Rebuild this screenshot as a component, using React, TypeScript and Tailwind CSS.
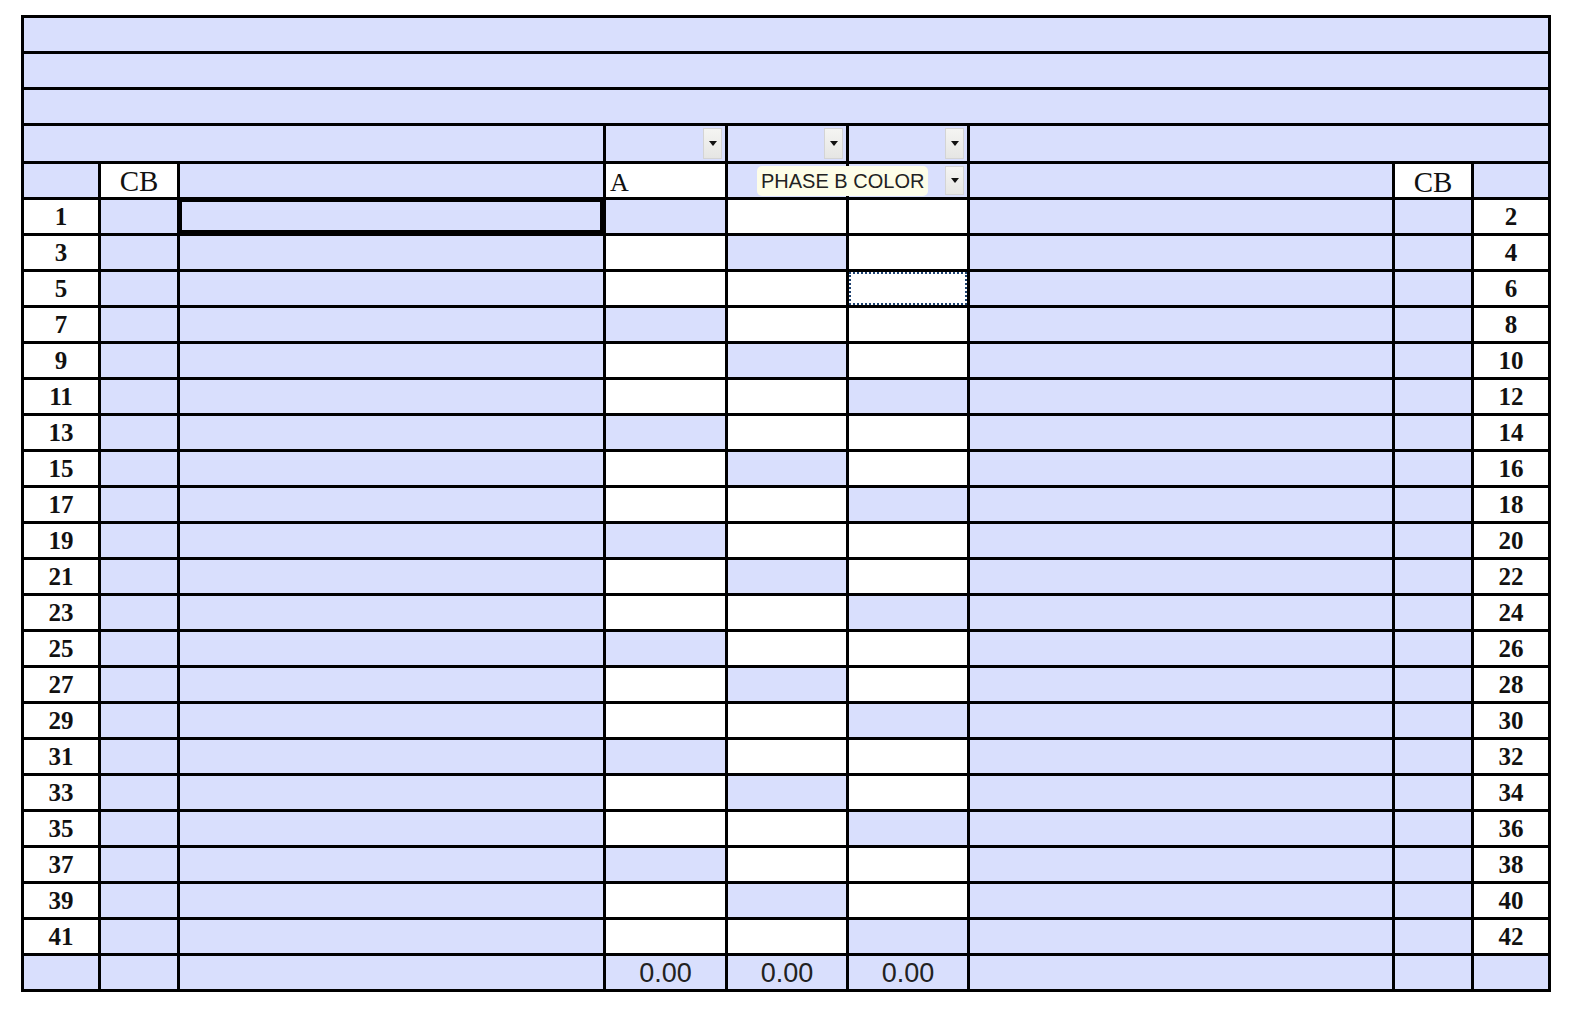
import React from 'react'

const serif = { fontFamily: '"Liberation Serif", "Times New Roman", serif' }
const sans = { fontFamily: '"Liberation Sans", Arial, sans-serif' }

// which of the A/B/C phase cells is shaded for each branch row
const shadeFor = (i: number) => i % 3

function Arrow() {
  return (
    <div className="my-[2px] mr-[3px] ml-auto flex w-[19px] items-center justify-center border border-[#d4d4d4] bg-gradient-to-b from-[#f4f4f2] to-[#e6e6e4]">
      <svg width="8" height="5" viewBox="0 0 8 5">
        <path d="M0 0 L8 0 L4 5 Z" fill="#111" />
      </svg>
    </div>
  )
}

export default function App() {
  const rows = Array.from({ length: 21 }, (_, i) => i)

  return (
    <div className="min-h-screen w-full bg-white pt-[15px] pl-[21px]">
      <div
        className="relative grid w-[1530px] gap-[3px] bg-black p-[3px]"
        style={{
          gridTemplateColumns: '74px 76px 423px 119px 118px 118px 422px 76px 74px',
          gridTemplateRows: '33px 33px 33px 35px',
          gridAutoRows: '33px',
        }}
      >
        {/* title rows */}
        <div className="col-span-9 bg-[#d9dffd]" />
        <div className="col-span-9 bg-[#d9dffd]" />
        <div className="col-span-9 bg-[#d9dffd]" />

        {/* phase selectors */}
        <div className="col-span-3 bg-[#d9dffd]" />
        <div className="flex bg-[#d9dffd]"><Arrow /></div>
        <div className="flex bg-[#d9dffd]"><Arrow /></div>
        <div className="flex bg-[#d9dffd]"><Arrow /></div>
        <div className="col-span-3 bg-[#d9dffd]" />

        {/* column headers */}
        <div className="bg-[#d9dffd]" />
        <div className="flex items-center justify-center bg-white pt-[2px] text-[29px] text-[#111]" style={serif}>CB</div>
        <div className="bg-[#d9dffd]" />
        <div className="flex items-center bg-white pl-[4px] pt-[3px] text-[26px] text-[#111]" style={serif}>A</div>
        <div className="bg-[#d9dffd]" />
        <div className="flex bg-[#d9dffd]"><Arrow /></div>
        <div className="bg-[#d9dffd]" />
        <div className="flex items-center justify-center bg-white pt-[5px] text-[29px] text-[#111]" style={serif}>CB</div>
        <div className="bg-[#d9dffd]" />

        {/* branch rows */}
        {rows.map((i) => {
          const s = shadeFor(i)
          const left = i * 2 + 1
          return (
            <React.Fragment key={i}>
              <div className="flex items-center justify-center bg-white pt-[1px] text-[25px] font-bold text-[#111]" style={serif}>{left}</div>
              <div className="bg-[#d9dffd]" />
              <div className={i === 0 ? 'border-2 border-r-[3px] border-b-[3px] border-black bg-[#d9dffd]' : 'bg-[#d9dffd]'} />
              <div className={s === 0 ? 'bg-[#d9dffd]' : 'bg-white'} />
              <div className={s === 1 ? 'bg-[#d9dffd]' : 'bg-white'} />
              {i === 2 ? (
                <div className="border-2 border-dotted border-[#1d4170] bg-white" />
              ) : (
                <div className={s === 2 ? 'bg-[#d9dffd]' : 'bg-white'} />
              )}
              <div className="bg-[#d9dffd]" />
              <div className="bg-[#d9dffd]" />
              <div className="flex items-center justify-center bg-white pt-[1px] text-[25px] font-bold text-[#111]" style={serif}>{left + 1}</div>
            </React.Fragment>
          )
        })}

        {/* totals */}
        <div className="bg-[#d9dffd]" />
        <div className="bg-[#d9dffd]" />
        <div className="bg-[#d9dffd]" />
        {['0.00', '0.00', '0.00'].map((v, k) => (
          <div key={k} className="flex items-center justify-center bg-[#d9dffd] pt-[2px] text-[27px] text-[#222]" style={sans}>{v}</div>
        ))}
        <div className="bg-[#d9dffd]" />
        <div className="bg-[#d9dffd]" />
        <div className="bg-[#d9dffd]" />

        {/* hover tooltip over the phase B header */}
        <div
          className="absolute top-[151px] left-[736px] flex h-[30px] items-center rounded-[5px] bg-[#fdfde8] px-[4px] text-[20px] text-[#222]"
          style={sans}
        >
          PHASE B COLOR
        </div>
      </div>
    </div>
  )
}
